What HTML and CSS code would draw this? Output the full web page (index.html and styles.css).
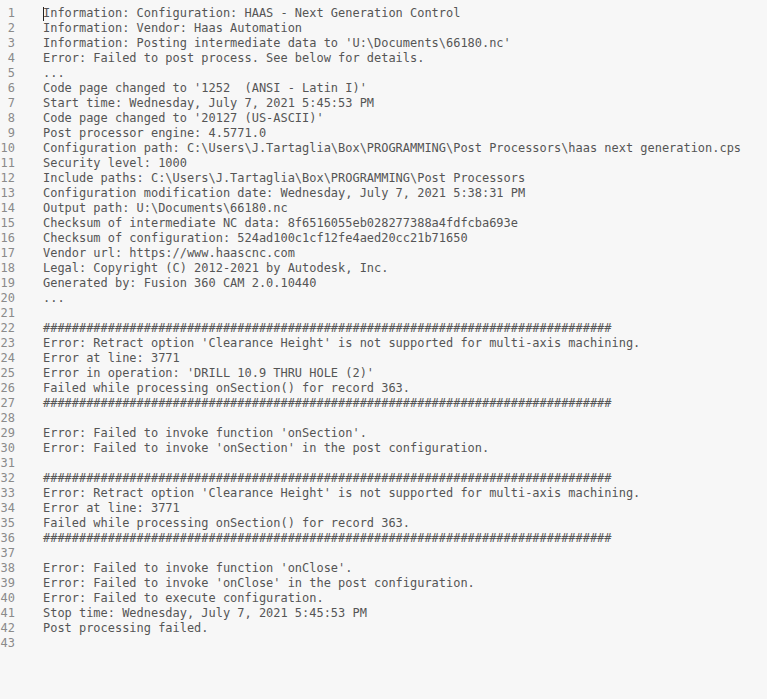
FILE: index.html
```html
<!DOCTYPE html>
<html>
<head>
<meta charset="utf-8">
<link rel="stylesheet" href="styles.css">
</head>
<body>
<div class="editor">
<pre class="gutter">1
2
3
4
5
6
7
8
9
10
11
12
13
14
15
16
17
18
19
20
21
22
23
24
25
26
27
28
29
30
31
32
33
34
35
36
37
38
39
40
41
42
43</pre>
<pre class="code"><span class="cursor"></span>Information: Configuration: HAAS - Next Generation Control
Information: Vendor: Haas Automation
Information: Posting intermediate data to 'U:\Documents\66180.nc'
Error: Failed to post process. See below for details.
...
Code page changed to '1252  (ANSI - Latin I)'
Start time: Wednesday, July 7, 2021 5:45:53 PM
Code page changed to '20127 (US-ASCII)'
Post processor engine: 4.5771.0
Configuration path: C:\Users\J.Tartaglia\Box\PROGRAMMING\Post Processors\haas next generation.cps
Security level: 1000
Include paths: C:\Users\J.Tartaglia\Box\PROGRAMMING\Post Processors
Configuration modification date: Wednesday, July 7, 2021 5:38:31 PM
Output path: U:\Documents\66180.nc
Checksum of intermediate NC data: 8f6516055eb028277388a4fdfcba693e
Checksum of configuration: 524ad100c1cf12fe4aed20cc21b71650
Vendor url: https://www.haascnc.com
Legal: Copyright (C) 2012-2021 by Autodesk, Inc.
Generated by: Fusion 360 CAM 2.0.10440
...

###############################################################################
Error: Retract option 'Clearance Height' is not supported for multi-axis machining.
Error at line: 3771
Error in operation: 'DRILL 10.9 THRU HOLE (2)'
Failed while processing onSection() for record 363.
###############################################################################

Error: Failed to invoke function 'onSection'.
Error: Failed to invoke 'onSection' in the post configuration.

###############################################################################
Error: Retract option 'Clearance Height' is not supported for multi-axis machining.
Error at line: 3771
Failed while processing onSection() for record 363.
###############################################################################

Error: Failed to invoke function 'onClose'.
Error: Failed to invoke 'onClose' in the post configuration.
Error: Failed to execute configuration.
Stop time: Wednesday, July 7, 2021 5:45:53 PM
Post processing failed.
</pre>
</div>
</body>
</html>
```
FILE: styles.css
```css
html, body {
  margin: 0;
  padding: 0;
  background: #f7f7f7;
  height: 100%;
}
.editor {
  display: flex;
  padding-top: 6px;
  font-family: "DejaVu Sans Mono", monospace;
  font-size: 11.96px;
  line-height: 15px;
}
.gutter, .code {
  margin: 0;
  font: inherit;
  white-space: pre;
}
.gutter {
  width: 15px;
  text-align: right;
  color: #8a8a8a;
}
.code {
  margin-left: 28px;
  color: #555555;
  position: relative;
}
.cursor {
  position: absolute;
  left: 0;
  top: 1px;
  width: 1px;
  height: 14px;
  background: #222;
}
```
